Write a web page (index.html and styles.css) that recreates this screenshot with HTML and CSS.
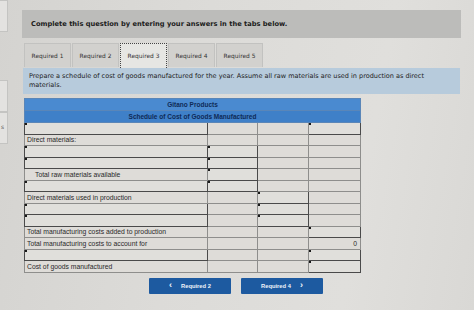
FILE: index.html
```html
<!DOCTYPE html>
<html>
<head>
<meta charset="utf-8">
<link rel="stylesheet" href="styles.css">
</head>
<body>
<div class="side">
  <div class="side-box top"></div>
  <div class="side-box mid"></div>
  <div class="side-box low"><span>s</span></div>
</div>
<div class="page">
  <div class="banner">Complete this question by entering your answers in the tabs below.</div>
  <div class="tabs">
    <div class="tab">Required 1</div>
    <div class="tab">Required 2</div>
    <div class="tab active">Required 3</div>
    <div class="tab">Required 4</div>
    <div class="tab">Required 5</div>
  </div>
  <div class="prompt">Prepare a schedule of cost of goods manufactured for the year. Assume all raw materials are used in production as direct materials.</div>
  <table class="sched">
    <colgroup><col class="c1"><col class="c2"><col class="c3"><col class="c4"></colgroup>
    <tr class="h1"><th colspan="4">Gitano Products</th></tr>
    <tr class="h2"><th colspan="4">Schedule of Cost of Goods Manufactured</th></tr>
    <tr><td class="in"></td><td></td><td></td><td class="in"></td></tr>
    <tr><td class="lbl">Direct materials:</td><td></td><td></td><td></td></tr>
    <tr><td class="in"></td><td class="in"></td><td></td><td></td></tr>
    <tr><td class="in"></td><td class="in"></td><td></td><td></td></tr>
    <tr><td class="lbl ind">Total raw materials available</td><td class="in"></td><td></td><td></td></tr>
    <tr><td class="in"></td><td class="in"></td><td></td><td></td></tr>
    <tr><td class="lbl">Direct materials used in production</td><td></td><td class="in"></td><td></td></tr>
    <tr><td class="in"></td><td></td><td class="in"></td><td></td></tr>
    <tr><td class="in"></td><td></td><td class="in"></td><td></td></tr>
    <tr><td class="lbl">Total manufacturing costs added to production</td><td></td><td></td><td class="in"></td></tr>
    <tr><td class="lbl">Total manufacturing costs to account for</td><td></td><td></td><td class="num">0</td></tr>
    <tr><td class="in"></td><td></td><td></td><td class="in"></td></tr>
    <tr><td class="lbl">Cost of goods manufactured</td><td></td><td></td><td class="in"></td></tr>
  </table>
  <div class="nav">
    <div class="btn"><span class="chev">&lsaquo;</span>Required 2</div>
    <div class="btn">Required 4<span class="chev r">&rsaquo;</span></div>
  </div>
</div>
</body>
</html>
```
FILE: styles.css
```css
html, body {
  margin: 0;
  padding: 0;
}
body {
  width: 474px;
  height: 310px;
  overflow: hidden;
  position: relative;
  background: linear-gradient(100deg, #d4d3d0 0%, #dcdbd8 40%, #e0dfdc 75%, #d9d8d5 100%);
  font-family: "DejaVu Sans", Verdana, sans-serif;
}
.side {
  position: absolute;
  left: 0;
  top: 0;
  width: 8px;
  height: 310px;
}
.side-box {
  position: absolute;
  left: -2px;
  width: 8px;
  border: 1px solid #c4c4c2;
  background: #e3e2e0;
}
.side-box.top { top: 0; height: 30px; }
.side-box.mid { top: 80px; height: 30px; }
.side-box.low { top: 112px; height: 30px; }
.side-box span {
  position: absolute;
  left: 2px;
  top: 10px;
  font-size: 6px;
  color: #555;
}
.page {
  padding: 10px 0 0 22px;
}
.banner {
  width: 430px;
  height: 28px;
  padding-left: 9px;
  background: #bcbcba;
  display: flex;
  align-items: center;
  font-weight: bold;
  font-size: 6.7px;
  color: #1c1c1c;
}
.tabs {
  display: flex;
  margin-top: 5px;
  margin-left: 2px;
  height: 25px;
}
.tab {
  width: 47px;
  height: 24px;
  margin-right: 1px;
  background: #d2d1ce;
  border: 1px solid #c2c2c0;
  border-bottom: none;
  box-sizing: border-box;
  display: flex;
  align-items: center;
  justify-content: center;
  font-size: 5.9px;
  color: #333;
}
.tab.active {
  background: #e6e6e3;
  border: 1px dotted #444;
  border-bottom: none;
  height: 25px;
}
.prompt {
  height: 26px;
  padding: 4px 6px 0 6px;
  box-sizing: border-box;
  width: 437px;
  margin-left: 1px;
  background: #b7cbdc;
  font-size: 6.5px;
  line-height: 9px;
  color: #222;
}
.sched {
  margin-top: 4px;
  margin-left: 2px;
  border-collapse: collapse;
  table-layout: fixed;
  width: 336px;
  font-family: "Liberation Sans", Arial, sans-serif;
}
.c1 { width: 183px; }
.c2 { width: 50px; }
.c3 { width: 51px; }
.c4 { width: 52px; }
.sched th {
  height: 11px;
  padding: 0;
  font-size: 6.5px;
  font-weight: bold;
  color: #0e2a57;
  border: 1px solid #5a86b8;
}
.h1 th { background: #4a8ad0; }
.h2 th { background: #3f80c8; }
.sched td {
  height: 10.5px;
  padding: 0 2px;
  background: #dedcd8;
  border: 1px solid #8e8e8c;
  font-size: 6.8px;
  line-height: 9px;
  color: #2a2a2a;
  white-space: nowrap;
  overflow: hidden;
}
.sched td.ind { padding-left: 10px; }
.sched td.in {
  background: #e0dfdb;
  border: 1px solid #4a4a4a;
  border-top: 1.5px solid #3a3a3a;
  position: relative;
}
.sched td.in::before {
  content: "";
  position: absolute;
  left: 0;
  top: 0;
  width: 2px;
  height: 2px;
  background: #1a1a1a;
}
.sched td.num {
  text-align: right;
  padding-right: 3px;
}
.nav {
  display: flex;
  gap: 10px;
  margin-top: 5px;
  margin-left: 127px;
}
.btn {
  width: 82px;
  height: 16px;
  background: #1d5aa0;
  border-radius: 1px;
  display: flex;
  align-items: center;
  justify-content: center;
  color: #eef3fa;
  font-family: "Liberation Sans", Arial, sans-serif;
  font-weight: bold;
  font-size: 5.8px;
}
.chev {
  font-size: 9px;
  margin-right: 9px;
  line-height: 1;
}
.chev.r {
  margin-right: 0;
  margin-left: 9px;
}
```
